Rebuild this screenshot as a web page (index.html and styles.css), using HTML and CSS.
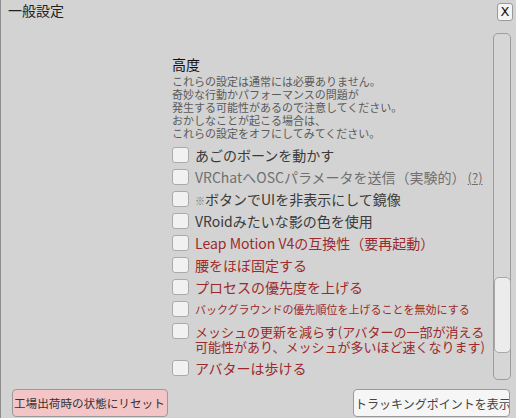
FILE: index.html
```html
<!DOCTYPE html>
<html lang="ja">
<head>
<meta charset="utf-8">
<title>一般設定</title>
<link rel="stylesheet" href="styles.css">
</head>
<body>
<div class="window">
  <div class="titlebar">
    <span class="title">一般設定</span>
    <button class="close">X</button>
  </div>
  <div class="main">
    <div class="content">
      <div class="heading">高度</div>
      <div class="desc">
        <div>これらの設定は通常には必要ありません。</div>
        <div>奇妙な行動かパフォーマンスの問題が</div>
        <div>発生する可能性があるので注意してください。</div>
        <div>おかしなことが起こる場合は、</div>
        <div>これらの設定をオフにしてみてください。</div>
      </div>
      <div class="options">
        <label class="row"><span class="box"></span><span class="label">あごのボーンを動かす</span></label>
        <label class="row"><span class="box"></span><span class="label muted">VRChatへOSCパラメータを送信（実験的）<span class="help">(?)</span></span></label>
        <label class="row"><span class="box"></span><span class="label"><span class="note">※</span>ボタンでUIを非表示にして鏡像</span></label>
        <label class="row"><span class="box"></span><span class="label">VRoidみたいな影の色を使用</span></label>
        <label class="row"><span class="box"></span><span class="label red">Leap Motion V4の互換性（要再起動）</span></label>
        <label class="row"><span class="box"></span><span class="label red">腰をほぼ固定する</span></label>
        <label class="row"><span class="box"></span><span class="label red">プロセスの優先度を上げる</span></label>
        <label class="row"><span class="box"></span><span class="label red small">バックグラウンドの優先順位を上げることを無効にする</span></label>
        <label class="row multi"><span class="box"></span><span class="label red mid">メッシュの更新を減らす(アバターの一部が消える<br>可能性があり、メッシュが多いほど速くなります)</span></label>
        <label class="row"><span class="box"></span><span class="label red">アバターは歩ける</span></label>
      </div>
    </div>
    <div class="scrollbar"><div class="thumb"></div></div>
  </div>
  <div class="footer">
    <button class="btn reset">工場出荷時の状態にリセット</button>
    <button class="btn track">トラッキングポイントを表示</button>
  </div>
</div>
</body>
</html>
```

FILE: styles.css
```css
* { box-sizing: border-box; }
html, body {
  margin: 0;
  padding: 0;
  background: #d3d3d3;
}
body {
  font-family: "Noto Sans CJK JP", "Noto Sans", sans-serif;
  color: #333;
}
.window {
  width: 516px;
  height: 418px;
  background: #d3d3d3;
  border-left: 1px solid #8e8e8e;
  overflow: hidden;
  display: flex;
  flex-direction: column;
}
.titlebar {
  height: 33px;
  display: flex;
  justify-content: space-between;
  align-items: flex-start;
  padding: 0 3px 0 7px;
  flex: none;
}
.title {
  font-size: 14px;
  line-height: 20px;
  color: #222;
}
.close {
  margin-top: 3px;
  width: 16px;
  height: 18px;
  padding: 0;
  border: 1px solid #9a9a9a;
  border-radius: 3px;
  background: #f4f4f4;
  font-family: "DejaVu Sans", sans-serif;
  font-size: 13px;
  line-height: 16px;
  color: #111;
}
.main {
  height: 347px;
  display: flex;
  flex: none;
  padding-right: 4px;
}
.content {
  flex: 1;
  overflow: hidden;
  padding: 22px 0 0 171px;
}
.heading {
  font-size: 14px;
  line-height: 18px;
  color: #111;
}
.desc {
  margin-top: 2px;
  font-size: 11px;
  line-height: 13px;
  color: #5a5a5a;
}
.options {
  margin-top: 4px;
  display: flex;
  flex-direction: column;
}
.row {
  display: flex;
  align-items: flex-start;
  padding-top: 3px;
  height: 22px;
  overflow: visible;
}
.row.multi {
  height: 37px;
}
.box {
  flex: none;
  width: 17px;
  height: 16px;
  border: 1px solid #aaaaaa;
  border-radius: 3px;
  background: #f1f1f1;
  margin-right: 6px;
}
.label {
  display: block;
  font-size: 14px;
  line-height: 16px;
  height: 16px;
  white-space: nowrap;
  color: #3a3a3a;
}
.label.muted { color: #707070; }
.label.red { color: #9c2a2a; }
.label.small { font-size: 11px; }
.label.mid {
  font-size: 13px;
  line-height: 15px;
  height: 30px;
  margin-top: 1px;
}
.note {
  font-size: 10px;
  color: #777;
}
.help {
  margin-left: 2px;
  text-decoration: underline;
  font-size: 13px;
}
.scrollbar {
  flex: none;
  width: 18px;
  height: 347px;
  margin-right: 1px;
  border: 1px solid #9c9c9c;
  border-radius: 5px;
  background: #d6d6d6;
  position: relative;
}
.thumb {
  position: absolute;
  left: 0;
  right: -1px;
  top: 243px;
  height: 76px;
  border: 1px solid #a8a8a8;
  border-radius: 5px;
  background: #ececec;
}
.footer {
  margin-top: 9px;
  display: flex;
  justify-content: space-between;
  padding: 0 6px 0 11px;
  flex: none;
}
.btn {
  height: 28px;
  padding: 0 1px;
  border: 1px solid #9a9a9a;
  border-radius: 4px;
  font-family: "Noto Sans CJK JP", sans-serif;
  font-size: 11.6px;
  color: #333;
  white-space: nowrap;
  overflow: hidden;
  text-align: left;
}
.reset {
  width: 156px;
  background: #f4c5c7;
}
.track {
  width: 157px;
  background: #f6f6f6;
  color: #444;
  font-size: 12px;
}
```
